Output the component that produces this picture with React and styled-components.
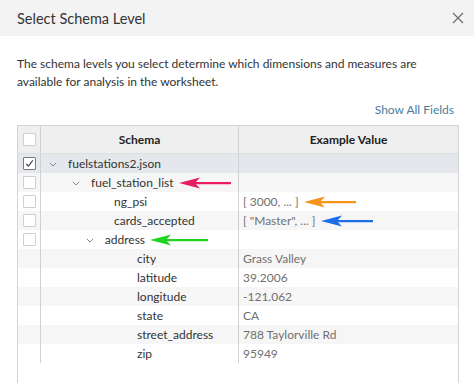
import React from "react";
import styled, { createGlobalStyle } from "styled-components";

const GlobalStyle = createGlobalStyle`
  html, body {
    margin: 0;
    padding: 0;
    background: #fff;
    overflow: hidden;
  }
  body {
    font-family: Lato, "Liberation Sans", Arial, sans-serif;
    color: #333;
  }
`;

const rows = [
  { name: "fuelstations2.json", level: 0, expand: true, check: true, checked: true },
  { name: "fuel_station_list", level: 1, expand: true, check: true, arrow: "#ea1c63" },
  { name: "ng_psi", level: 2, check: true, value: "[ 3000, ... ]", valueArrow: "#f7941d" },
  { name: "cards_accepted", level: 2, check: true, value: '[ "Master", ... ]', valueArrow: "#1c6ee6" },
  { name: "address", level: 1.6, expand: true, check: true, arrow: "#22d322", arrowWidth: 58 },
  { name: "city", level: 3, value: "Grass Valley" },
  { name: "latitude", level: 3, value: "39.2006" },
  { name: "longitude", level: 3, value: "-121.062" },
  { name: "state", level: 3, value: "CA" },
  { name: "street_address", level: 3, value: "788 Taylorville Rd" },
  { name: "zip", level: 3, value: "95949" },
];

export default function App() {
  return (
    <>
      <GlobalStyle />
      <Dialog>
        <Header>
          <Title>Select Schema Level</Title>
          <CloseButton aria-label="Close">
            <svg width="12" height="12" viewBox="0 0 12 12">
              <path d="M1 1 L11 11 M11 1 L1 11" stroke="#6b6b6b" strokeWidth="1.2" fill="none" />
            </svg>
          </CloseButton>
        </Header>
        <Body>
          <Description>
            The schema levels you select determine which dimensions and measures are
            available for analysis in the worksheet.
          </Description>
          <LinkRow>
            <ShowAll>Show All Fields</ShowAll>
          </LinkRow>
          <Table>
            <HeadRow>
              <CheckCell>
                <Checkbox />
              </CheckCell>
              <HeadCell>Schema</HeadCell>
              <HeadCell>Example Value</HeadCell>
            </HeadRow>
            {rows.map((r, i) => (
              <Row key={r.name} $selected={r.checked} $striped={i % 2 === 1}>
                <CheckCell>{r.check && <Checkbox $checked={r.checked}>{r.checked && <CheckMark />}</Checkbox>}</CheckCell>
                <SchemaCell $level={r.level}>
                  <Chevron>{r.expand && <ChevronIcon />}</Chevron>
                  <span>{r.name}</span>
                  {r.arrow && <Arrow color={r.arrow} width={r.arrowWidth || 52} />}
                </SchemaCell>
                <ValueCell>
                  {r.value && <span>{r.value}</span>}
                  {r.valueArrow && <Arrow color={r.valueArrow} width={52} />}
                </ValueCell>
              </Row>
            ))}
            <Filler />
          </Table>
        </Body>
      </Dialog>
    </>
  );
}

function CheckMark() {
  return (
    <svg width="11" height="11" viewBox="0 0 11 11">
      <path d="M2.2 5.8 L4.4 8 L8.8 2.4" stroke="#444" strokeWidth="1.2" fill="none" />
    </svg>
  );
}

function ChevronIcon() {
  return (
    <svg width="8" height="5" viewBox="0 0 8 5">
      <path d="M0.8 0.8 L4 4 L7.2 0.8" stroke="#8a8a8a" strokeWidth="1" fill="none" />
    </svg>
  );
}

function Arrow({ color, width }) {
  return (
    <ArrowSvg width={width} height="12" viewBox={`0 0 ${width} 12`}>
      <polygon points={`0,6 21,0.5 17,5 ${width},5 ${width},7.2 17,7.2 21,11.5`} fill={color} />
    </ArrowSvg>
  );
}

const Dialog = styled.div`
  width: 474px;
  height: 383px;
  display: flex;
  flex-direction: column;
`;

const Header = styled.div`
  height: 36px;
  flex: none;
  background: #f3f3f3;
  display: flex;
  align-items: center;
  justify-content: space-between;
  padding: 0 10px 0 17px;
`;

const Title = styled.div`
  font-size: 14.5px;
  color: #333;
`;

const CloseButton = styled.div`
  width: 12px;
  height: 12px;
  display: flex;
`;

const Body = styled.div`
  padding: 19px 15px 0 17px;
  display: flex;
  flex-direction: column;
  flex: 1;
  min-height: 0;
`;

const Description = styled.p`
  margin: 0;
  font-size: 12px;
  line-height: 18px;
  color: #333;
`;

const LinkRow = styled.div`
  display: flex;
  justify-content: flex-end;
  padding-top: 10px;
  padding-right: 5px;
`;

const ShowAll = styled.span`
  font-size: 12px;
  line-height: 18px;
  color: #4a7d9c;
`;

const Table = styled.div`
  margin-top: 6px;
  border: 1px solid #d4d4d4;
  border-bottom: none;
  flex: 1;
  display: flex;
  flex-direction: column;
`;

const HeadRow = styled.div`
  display: grid;
  grid-template-columns: 22px 198px 1fr;
  height: 27px;
  background: #efefef;
  border-bottom: 1px solid #dedede;
`;

const HeadCell = styled.div`
  display: flex;
  align-items: center;
  justify-content: center;
  font-size: 12px;
  font-weight: 700;
  color: #222;
  border-left: 1px solid #d0d0d0;
`;

const Row = styled.div`
  display: grid;
  grid-template-columns: 22px 198px 1fr;
  height: 19px;
  font-size: 12px;
  background: ${(p) => (p.$selected ? "#e4e8ed" : p.$striped ? "#f6f6f6" : "#fff")};
`;

const CheckCell = styled.div`
  display: flex;
  align-items: center;
  justify-content: center;
  padding-left: 1px;
`;

const Checkbox = styled.div`
  width: 13px;
  height: 13px;
  box-sizing: border-box;
  background: #fff;
  border: 1px solid ${(p) => (p.$checked ? "#7a7a7a" : "#cfcfcf")};
  border-radius: 1px;
  display: flex;
  align-items: center;
  justify-content: center;
`;

const SchemaCell = styled.div`
  display: flex;
  align-items: center;
  padding-left: ${(p) => 8 + p.$level * 23}px;
  border-left: 1px solid #d0d0d0;
  color: #333;
  white-space: nowrap;
`;

const Chevron = styled.span`
  width: 19px;
  flex: none;
  display: flex;
  align-items: center;
  padding-top: 1px;
`;

const ValueCell = styled.div`
  display: flex;
  align-items: center;
  padding-left: 4px;
  border-left: 1px solid #d0d0d0;
  color: #707070;
  white-space: nowrap;
`;

const ArrowSvg = styled.svg`
  flex: none;
  margin-left: 5px;
`;

const Filler = styled.div`
  flex: 1;
`;
